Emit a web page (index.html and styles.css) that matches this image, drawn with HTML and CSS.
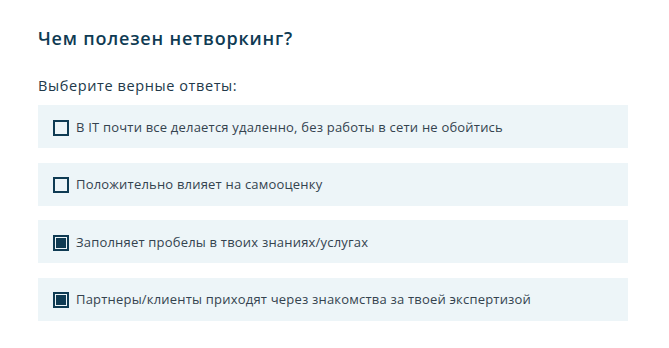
FILE: index.html
```html
<!DOCTYPE html>
<html lang="ru">
  <head>
    <meta charset="UTF-8" />
    <meta name="viewport" content="width=device-width, initial-scale=1" />
    <title>Квиз</title>
    <link rel="stylesheet" href="styles.css">
  </head>
  <body>
    <div class="quiz">
      <h2>Чем полезен нетворкинг?</h2>
      <p class="hint">Выберите верные ответы:</p>

      <div class="answers">
        <label class="answer">
          <input type="checkbox" />
          <span class="box"></span>
          <span class="text">В IT почти все делается удаленно, без работы в сети не обойтись</span>
        </label>
        <label class="answer">
          <input type="checkbox" />
          <span class="box"></span>
          <span class="text">Положительно влияет на самооценку</span>
        </label>
        <label class="answer">
          <input type="checkbox" checked />
          <span class="box"></span>
          <span class="text">Заполняет пробелы в твоих знаниях/услугах</span>
        </label>
        <label class="answer">
          <input type="checkbox" checked />
          <span class="box"></span>
          <span class="text">Партнеры/клиенты приходят через знакомства за твоей экспертизой</span>
        </label>
      </div>
    </div>
  </body>
</html>
```

FILE: styles.css
```css
/* Global Styles */
body {
  font-family: "Open Sans", "Noto Sans", sans-serif;
  background-color: #ffffff;
  margin: 0;
}

.quiz {
  width: 590px;
  padding: 26px 0 0 38px;
}

h2 {
  color: #0f3b53;
  font-size: 18px;
  font-weight: 600;
  letter-spacing: 0.8px;
  margin: 0 0 26px;
  line-height: 24px;
}

.hint {
  color: #22394a;
  font-size: 14.5px;
  letter-spacing: 0.6px;
  margin: 0 0 9px;
  line-height: 20px;
}

/* Answers */
.answers {
  display: flex;
  flex-direction: column;
  gap: 14.5px;
}

.answer {
  display: flex;
  align-items: center;
  height: 43px;
  padding-left: 15px;
  background-color: #edf5f8;
  cursor: pointer;
}

.answer input {
  display: none;
}

.box {
  width: 10px;
  height: 10px;
  border: 2px solid #0f3b53;
  padding: 1px;
  margin-top: 2px;
  background-clip: content-box;
  flex-shrink: 0;
}

.answer input:checked + .box {
  background-color: #0f3b53;
}

.text {
  margin-left: 7px;
  color: #34434f;
  font-size: 13px;
  letter-spacing: 0.2px;
}
```
